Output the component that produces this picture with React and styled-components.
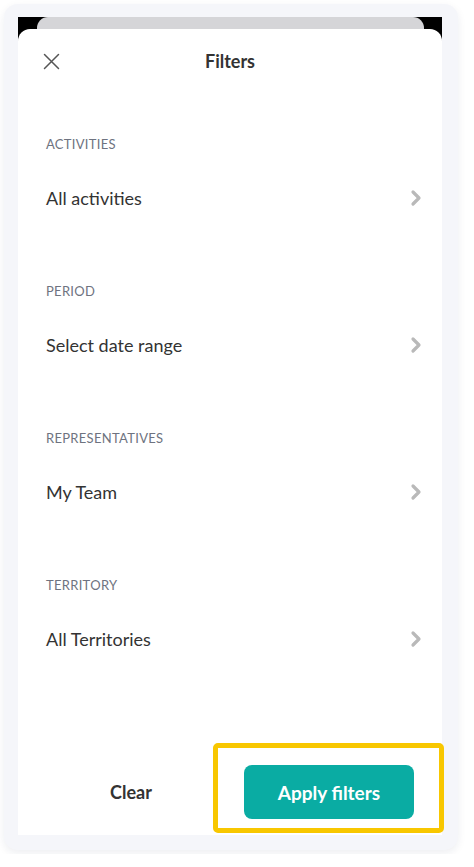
import React from "react";
import styled, { createGlobalStyle } from "styled-components";

const Global = createGlobalStyle`
  html, body { margin: 0; padding: 0; background: #ffffff; }
  body { font-family: Lato, "Noto Sans", sans-serif; }
  * { box-sizing: border-box; }
`;

const Frame = styled.div`
  position: relative;
  margin: 4px;
  width: 454px;
  height: 846px;
  border-radius: 14px;
  background: #f5f6fa;
  box-shadow: 0 3px 8px rgba(30, 40, 80, 0.08);
  padding: 13px 16px 15px 14px;
  display: flex;
`;

const Screen = styled.div`
  flex: 1;
  display: flex;
  flex-direction: column;
  background: #000;
`;

const BackSheet = styled.div`
  height: 13px;
  margin: 0 18px 0 19px;
  background: #d5d5d8;
  border-radius: 11px 11px 0 0;
  flex-shrink: 0;
`;

const Card = styled.div`
  flex: 1;
  margin-top: -1px;
  background: #fff;
  border-radius: 12px 12px 0 0;
  display: flex;
  flex-direction: column;
`;

const Header = styled.div`
  height: 64px;
  padding: 0 24px;
  display: grid;
  grid-template-columns: 40px 1fr 40px;
  align-items: center;
`;

const CloseBtn = styled.button`
  border: 0;
  background: none;
  padding: 0;
  width: 18px;
  height: 18px;
  display: flex;
  align-items: center;
  justify-content: center;
  color: #555;
`;

const Title = styled.div`
  text-align: center;
  font-size: 18px;
  font-weight: 700;
  color: #333;
`;

const List = styled.div`
  padding: 41px 20px 0 28px;
  display: flex;
  flex-direction: column;
  gap: 59px;
`;

const Section = styled.div`
  display: flex;
  flex-direction: column;
  gap: 20px;
`;

const Label = styled.div`
  height: 20px;
  line-height: 20px;
  font-size: 13px;
  color: #6e7380;
  text-transform: uppercase;
  letter-spacing: 0.3px;
`;

const Row = styled.div`
  height: 48px;
  display: flex;
  align-items: center;
  justify-content: space-between;
`;

const Value = styled.div`
  font-size: 18px;
  color: #333;
`;

const Footer = styled.div`
  margin-top: auto;
  padding: 0 28px 16px 0;
  display: flex;
  align-items: center;
`;

const ClearBtn = styled.button`
  width: 226px;
  border: 0;
  background: none;
  font-family: inherit;
  font-size: 18px;
  font-weight: 700;
  color: #333;
  padding: 0;
`;

const ApplyBtn = styled.button`
  width: 170px;
  height: 54px;
  border: 0;
  border-radius: 8px;
  background: #0aaca3;
  color: #fff;
  font-family: inherit;
  font-size: 19px;
  font-weight: 700;
`;

const Highlight = styled.div`
  position: absolute;
  left: 209px;
  top: 739px;
  width: 231px;
  height: 90px;
  border: 5px solid #f8c700;
  border-radius: 5px;
  pointer-events: none;
`;

const Chevron = () => (
  <svg width="12" height="18" viewBox="0 0 12 18" fill="none">
    <polyline
      points="3,3 9,9 3,15"
      stroke="#b9b9b9"
      strokeWidth="3.2"
      strokeLinecap="round"
      strokeLinejoin="round"
    />
  </svg>
);

const sections = [
  { label: "Activities", value: "All activities" },
  { label: "Period", value: "Select date range" },
  { label: "Representatives", value: "My Team" },
  { label: "Territory", value: "All Territories" },
];

export default function App() {
  return (
    <>
      <Global />
      <Frame>
        <Screen>
          <BackSheet />
          <Card>
            <Header>
              <CloseBtn aria-label="Close">
                <svg width="17" height="17" viewBox="0 0 17 17" fill="none">
                  <path d="M1.5 1.5 L15.5 15.5 M15.5 1.5 L1.5 15.5" stroke="#555" strokeWidth="1.5" strokeLinecap="round" />
                </svg>
              </CloseBtn>
              <Title>Filters</Title>
              <span />
            </Header>
            <List>
              {sections.map((s) => (
                <Section key={s.label}>
                  <Label>{s.label}</Label>
                  <Row>
                    <Value>{s.value}</Value>
                    <Chevron />
                  </Row>
                </Section>
              ))}
            </List>
            <Footer>
              <ClearBtn>Clear</ClearBtn>
              <ApplyBtn>Apply filters</ApplyBtn>
            </Footer>
          </Card>
        </Screen>
        <Highlight />
      </Frame>
    </>
  );
}
